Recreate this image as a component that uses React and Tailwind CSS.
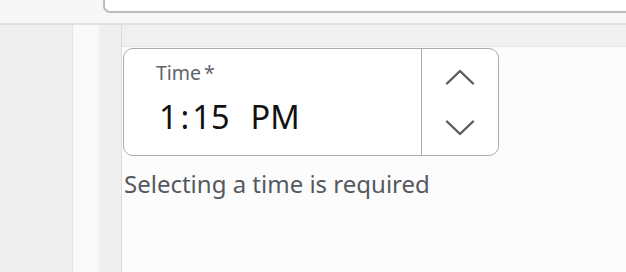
const font = { fontFamily: '"Noto Sans", "Open Sans", sans-serif' };

/* 矢印アイコン */
function Chevron({ up }) {
    return (
        <svg width="30" height="16" viewBox="0 0 30 16" fill="none">
            <polyline
                points={up ? "2,14.5 15,2 28,14.5" : "2,1.5 15,14 28,1.5"}
                stroke="currentColor"
                strokeWidth="2.4"
                strokeLinecap="round"
                strokeLinejoin="round"
            />
        </svg>
    );
}

/* ヘッダー部分 */
function TopBar() {
    return (
        <div className="h-[25px] bg-[#f7f7f7] border-b-2 border-[#e0e0e0] flex">
            <div className="ml-[103px] flex-1 h-[13px] bg-white border-l-2 border-b-2 border-[#bcbcbc] rounded-bl-[7px]" />
        </div>
    );
}

/* 時間入力 */
function TimeField() {
    return (
        <div className="w-[376px] h-[108px] flex border-[1.5px] border-[#acacac] rounded-[10px] bg-white">
            <div className="flex-1 pl-[32px] pt-[11px]">
                <div className="text-[19.5px] leading-[26px] text-[#5f6368]">
                    Time<span className="ml-[3px]">*</span>
                </div>
                <div className="flex items-baseline text-[32.5px] leading-[44px] text-[#111] mt-[9px] ml-[3px]">
                    <span>1</span>
                    <span className="mx-[3px]">:</span>
                    <span>15</span>
                    <span className="ml-[21px]">PM</span>
                </div>
            </div>
            <div className="w-[77px] border-l-[1.5px] border-[#acacac] flex flex-col items-center justify-center gap-[35px] text-[#585b5f]">
                <Chevron up />
                <Chevron />
            </div>
        </div>
    );
}

export default function App() {
    return (
        <div className="w-[626px] h-[272px] overflow-hidden bg-[#efefef]" style={font}>
            <TopBar />
            <div className="flex h-[247px]">
                <div className="w-[73px] bg-[#efefef] border-r border-[#e4e4e4]" />
                <div className="w-[26px] bg-[#f9f9f9]" />
                <div className="w-[23px] bg-[#efefef] border-r border-[#dcdcdc]" />
                <div className="flex-1 flex flex-col">
                    <div className="h-[21px] bg-[#f0f0f0]" />
                    <div className="flex-1 bg-[#fcfcfc] border-t border-[#e6e6e6] pl-[1px] pt-[1px]">
                        <TimeField />
                        <div className="mt-[13px] ml-[1px] text-[24px] leading-[30px] text-[#55595e]">
                            Selecting a time is required
                        </div>
                    </div>
                </div>
            </div>
        </div>
    );
}
